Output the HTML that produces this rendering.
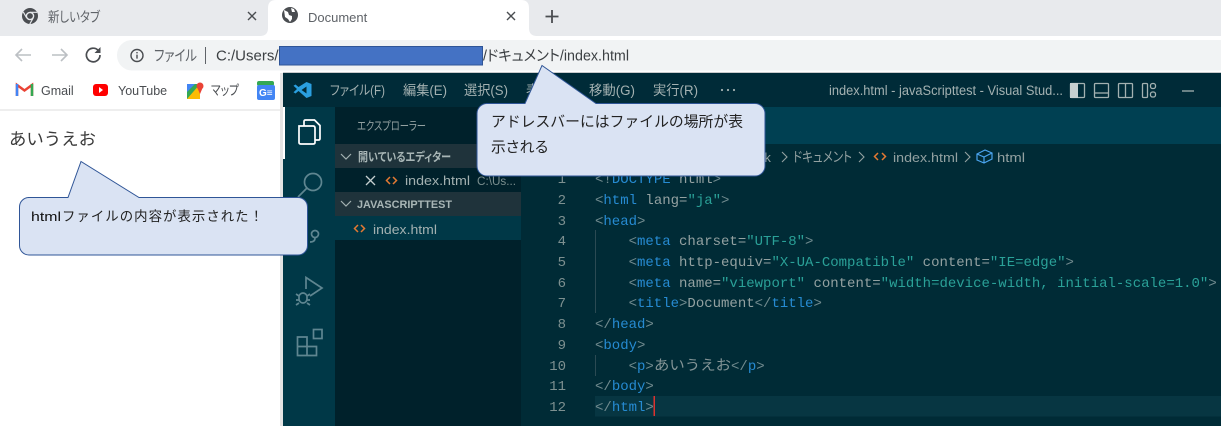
<!DOCTYPE html>
<html lang="ja"><head><meta charset="UTF-8"><title>Document</title>
<style>
html,body{margin:0;padding:0;background:#fff;width:1221px;height:426px;overflow:hidden}
svg{display:block}
text{font-family:"Liberation Sans","Noto Sans CJK JP",sans-serif;white-space:pre}
.k{font-feature-settings:"palt"}
.m{font-family:"Liberation Mono","Noto Sans CJK JP",monospace;font-size:14px;fill:#839496}
.b{fill:#268bd2}.a{fill:#93a1a1}.s{fill:#2aa198}.p{fill:#718b8f}
.n{font-family:"Liberation Mono",monospace;font-size:14px;fill:#7d9090;text-anchor:end}
.ch{font-size:13px;fill:#5f6368}
.v{fill:#a3b1b1;font-size:13.500px}
</style></head><body>
<svg xmlns="http://www.w3.org/2000/svg" width="1221" height="426" viewBox="0 0 1221 426">
<rect width="1221" height="426" fill="#fff"/>
<!-- tab strip -->
<rect width="1221" height="36" fill="#e8eaed"/>
<path d="M260 36q8 0 8-8V8q0-8 8-8h245q8 0 8 8v20q0 8 8 8z" fill="#fff"/>
<circle cx="30" cy="16" r="8" fill="#4a4d51"/><circle cx="30" cy="16" r="3.600" fill="#4a4d51" stroke="#e8eaed" stroke-width="1.400"/>
<path d="M30 12.300h7M26.700 18l-3.400-6M33.200 18l-3.400 6" stroke="#e8eaed" stroke-width="1.200"/>
<text x="48" y="22" class="ch k" style="font-size:14px" textLength="52" lengthAdjust="spacingAndGlyphs">新しいタブ</text>
<path d="M248 12l8 8M256 12l-8 8M507 12l8 8M515 12l-8 8" stroke="#4a4d51" stroke-width="1.400"/>
<circle cx="290" cy="15" r="8" fill="#4a4d51"/>
<path d="M284 10l4 2 1 3 3 1 0 3-2 3-2-3-3-2zM291 8l3 1 1 3-3 0z" fill="#fff"/>
<text x="308" y="22" class="ch">Document</text>
<path d="M552 10v13M545.500 16.500h13" stroke="#4a4d51" stroke-width="1.800"/>
<!-- toolbar -->
<path d="M31 55H16M22 49l-6 6 6 6" fill="none" stroke="#bcc0c4" stroke-width="1.600"/>
<path d="M52 55h15M61 49l6 6-6 6" fill="none" stroke="#bcc0c4" stroke-width="1.600"/>
<path d="M100 55a6.800 6.800 0 1 1-2-4.800" fill="none" stroke="#4a4d51" stroke-width="1.700"/><path d="M100.500 47v6h-6z" fill="#4a4d51"/>
<rect x="117" y="40" width="1130" height="30.500" rx="15" fill="#f1f3f4"/>
<circle cx="137" cy="55.500" r="6" fill="none" stroke="#4a4d51" stroke-width="1.400"/><path d="M137 52v1.400M137 54.600v4" stroke="#4a4d51" stroke-width="1.400"/>
<text x="154" y="60.500" class="k" style="font-size:15px;fill:#5f6368" textLength="43" lengthAdjust="spacingAndGlyphs">ファイル</text>
<rect x="205" y="47" width="1" height="17" fill="#5f6368"/>
<text x="216" y="60.500" style="font-size:15px;fill:#3c4043">C:/Users/</text>
<rect x="279.500" y="46.500" width="203" height="18.500" fill="#4472c4" stroke="#2f5597" stroke-width="1"/>
<text x="483" y="60.500" class="k" style="font-size:15px;fill:#3c4043" textLength="146" lengthAdjust="spacingAndGlyphs">/ドキュメント/index.html</text>
<!-- bookmarks -->
<path d="M17 96V85l7.500 5.500L32 85v11" fill="none" stroke="#ea4335" stroke-width="2.500"/>
<path d="M17 84v12" stroke="#4285f4" stroke-width="2.500"/><path d="M32 84v12" stroke="#34a853" stroke-width="2.500"/>
<text x="41" y="95" style="font-size:12.500px;fill:#4a4d51">Gmail</text>
<rect x="93" y="84" width="15" height="12" rx="3" fill="#f00"/><path d="M99 87l4 3-4 3z" fill="#fff"/>
<text x="118" y="95" style="font-size:12.500px;fill:#4a4d51">YouTube</text>
<path d="M187 84h13v15h-13z" fill="#34a853"/><path d="M187 99l13-15v15z" fill="#fbbc04"/><path d="M187 84h8l-8 8z" fill="#4285f4"/>
<circle cx="200" cy="86" r="3.500" fill="#ea4335"/><path d="M197 87l3 7 3-7z" fill="#ea4335"/>
<text x="211" y="95" class="k" style="font-size:13.500px;fill:#4a4d51" textLength="28" lengthAdjust="spacingAndGlyphs">マップ</text>
<rect x="257" y="81" width="17" height="5" rx="2" fill="#34a853"/>
<rect x="257" y="85" width="18" height="15" rx="2" fill="#4285f4"/>
<text x="259" y="96" style="font-size:10px;font-weight:bold;fill:#fff">G≡</text>
<rect x="0" y="109" width="283" height="2" fill="#eeeeee"/>
<!-- page -->
<text x="9" y="145" style="font-size:17px;fill:#3a3a3a" textLength="87" lengthAdjust="spacingAndGlyphs">あいうえお</text>
<!-- vscode -->
<rect x="280" y="73" width="3" height="353" fill="#e4e4e4"/>
<rect x="283" y="72" width="938" height="1.500" fill="#c9cbcd"/>
<rect x="283" y="73" width="938" height="353" fill="#002b38"/>
<rect x="283" y="107" width="53" height="319" fill="#003847"/>
<rect x="283" y="107" width="2" height="52" fill="#fff"/>
<rect x="335" y="107" width="186" height="319" fill="#00212b"/>
<rect x="335" y="144" width="186" height="24" fill="#1f333b"/>
<rect x="335" y="192" width="186" height="24" fill="#1f333b"/>
<rect x="335" y="216" width="186" height="24" fill="#003847"/>
<rect x="521" y="107" width="700" height="319" fill="#002b36"/>
<rect x="521" y="107" width="700" height="37" fill="#004052"/>
<!-- vscode logo -->
<path d="M306.500 82l5 2v12l-5 2-8-7-3 2.500-2-1.200 3.500-3.300-3.500-3.300 2-1.200 3 2.500zM306.500 86.500l-5 3.500 5 3.500z" fill="#2a9fe0"/>
<!-- menu -->
<text x="330" y="95" class="v k" textLength="55" lengthAdjust="spacingAndGlyphs">ファイル(F)</text>
<text x="403" y="95" class="v" textLength="44" lengthAdjust="spacingAndGlyphs">編集(E)</text>
<text x="464" y="95" class="v" textLength="44" lengthAdjust="spacingAndGlyphs">選択(S)</text>
<text x="526" y="95" class="v" textLength="44" lengthAdjust="spacingAndGlyphs">表示(V)</text>
<text x="589" y="95" class="v" textLength="46" lengthAdjust="spacingAndGlyphs">移動(G)</text>
<text x="653" y="95" class="v" textLength="45" lengthAdjust="spacingAndGlyphs">実行(R)</text>
<circle cx="722" cy="90" r="1.100" fill="#a3b1b1"/><circle cx="728" cy="90" r="1.100" fill="#a3b1b1"/><circle cx="734" cy="90" r="1.100" fill="#a3b1b1"/>
<text x="829" y="95" class="v" textLength="234" lengthAdjust="spacingAndGlyphs">index.html - javaScripttest - Visual Stud...</text>
<!-- layout icons -->
<g fill="none" stroke="#a3b1b1" stroke-width="1.300">
<rect x="1070.500" y="83.500" width="14" height="14" rx="1"/>
<rect x="1094.500" y="83.500" width="14" height="14" rx="1"/><path d="M1095 93h14"/>
<rect x="1118.500" y="83.500" width="14" height="14" rx="1"/><path d="M1125.500 84v13"/>
<rect x="1142.500" y="83.500" width="5" height="14" rx="1"/><rect x="1150.500" y="83.500" width="5" height="5" rx="2"/><rect x="1150.500" y="92" width="5" height="5" rx="2"/>
<path d="M1182 91h12"/>
</g>
<rect x="1070" y="83" width="8" height="15" fill="#c8d0d0"/>
<!-- activity icons -->
<g fill="none" stroke="#fff" stroke-width="1.700">
<path d="M304 126v-4.500q0-1.500 1.500-1.500h9l5.500 5.500v13q0 1.500-1.500 1.500H315"/>
<path d="M299 126h14q2 0 2 2v14.500q0 1.500-2 1.500h-12q-2 0-2-1.500z"/>
</g>
<g fill="none" stroke="#5f8691" stroke-width="1.700">
<circle cx="313" cy="182" r="8.500"/><path d="M307 188l-9 9"/>
<circle cx="315" cy="234" r="3.500"/><path d="M315 238q0 4-5 4"/>
<path d="M306 289v-11.500l16 10.500-12 8"/>
<path d="M299 297a4 4 0 0 1 8 0v2a4 4 0 0 1-8 0zM296 294l3 2M310 294l-3 2M296 300h3M307 300h3M296 305l3-2M310 305l-3-2"/>
<path d="M297.500 337h9.500v9.500h9.500v9h-19zM297.500 346.500H307V355.500"/>
<rect x="313.500" y="329.500" width="8.500" height="9"/>
</g>
<!-- sidebar -->
<text x="357" y="130" class="k" style="font-size:12px;fill:#93a1a1" textLength="69" lengthAdjust="spacingAndGlyphs">エクスプローラー</text>
<path d="M341 154l5 5 5-5M341 201l5 5 5-5" fill="none" stroke="#a3b1b1" stroke-width="1.200"/>
<text x="358" y="161" class="k" style="font-size:12px;font-weight:bold;fill:#a8b6b6" textLength="93" lengthAdjust="spacingAndGlyphs">開いているエディター</text>
<path d="M366 176l9 9M375 176l-9 9" stroke="#c5cfcf" stroke-width="1.300"/>
<path d="M390 177l-3.500 3.500 3.500 3.500M393 177l3.500 3.500-3.500 3.500" fill="none" stroke="#e37933" stroke-width="1.500"/>
<text x="405" y="185" style="font-size:13px;fill:#a3b1b1" textLength="65" lengthAdjust="spacingAndGlyphs">index.html</text>
<text x="477" y="185" style="font-size:11.500px;fill:#7a8e8e" textLength="39" lengthAdjust="spacingAndGlyphs">C:\Us...</text>
<text x="357" y="208" style="font-size:11px;font-weight:bold;fill:#a8b6b6" textLength="95" lengthAdjust="spacingAndGlyphs">JAVASCRIPTTEST</text>
<path d="M358 225l-3.500 3.500 3.500 3.500M361 225l3.500 3.500-3.500 3.500" fill="none" stroke="#e37933" stroke-width="1.500"/>
<text x="373" y="234" style="font-size:13px;fill:#a3b1b1" textLength="64" lengthAdjust="spacingAndGlyphs">index.html</text>
<!-- breadcrumb -->
<text x="755" y="162" style="font-size:13px;fill:#93a1a1">wk</text>
<path d="M782 152l5 5-5 5M859 152l5 5-5 5M965 152l5 5-5 5" fill="none" stroke="#93a1a1" stroke-width="1.100"/>
<text x="793" y="162" class="k" style="font-size:14px;fill:#93a1a1" textLength="59" lengthAdjust="spacingAndGlyphs">ドキュメント</text>
<path d="M878 153l-3.500 3.500 3.500 3.500M882 153l3.500 3.500-3.500 3.500" fill="none" stroke="#e37933" stroke-width="1.500"/>
<text x="893" y="162" style="font-size:13px;fill:#93a1a1" textLength="65" lengthAdjust="spacingAndGlyphs">index.html</text>
<path d="M977 154l8-4 7 3v6l-8 4-7-3zM977 154l7 3 8-4M984 157v6" fill="none" stroke="#4aa5f0" stroke-width="1.200"/>
<text x="997" y="162" style="font-size:13px;fill:#93a1a1" textLength="28" lengthAdjust="spacingAndGlyphs">html</text>
<!-- code -->
<rect x="595" y="396" width="626" height="20.500" fill="#073642"/>
<rect x="595" y="230" width="1" height="83" fill="#2b4a53"/>
<rect x="595" y="355" width="1" height="21" fill="#2b4a53"/>
<g>
<text x="566" y="183" class="n">1</text><text x="566" y="204" class="n">2</text><text x="566" y="225" class="n">3</text><text x="566" y="245" class="n">4</text><text x="566" y="266" class="n">5</text><text x="566" y="287" class="n">6</text><text x="566" y="307" class="n">7</text><text x="566" y="328" class="n">8</text><text x="566" y="349" class="n">9</text><text x="566" y="370" class="n">10</text><text x="566" y="390" class="n">11</text><text x="566" y="411" class="n">12</text>
</g>
<text x="595" y="183" class="m"><tspan class="p">&lt;!</tspan><tspan class="b">DOCTYPE</tspan> <tspan class="a">html</tspan><tspan class="p">&gt;</tspan></text>
<text x="595" y="204" class="m"><tspan class="p">&lt;</tspan><tspan class="b">html</tspan> <tspan class="a">lang=</tspan><tspan class="s">"ja"</tspan><tspan class="p">&gt;</tspan></text>
<text x="595" y="225" class="m"><tspan class="p">&lt;</tspan><tspan class="b">head</tspan><tspan class="p">&gt;</tspan></text>
<text x="628.600" y="245" class="m"><tspan class="p">&lt;</tspan><tspan class="b">meta</tspan> <tspan class="a">charset=</tspan><tspan class="s">"UTF-8"</tspan><tspan class="p">&gt;</tspan></text>
<text x="628.600" y="266" class="m"><tspan class="p">&lt;</tspan><tspan class="b">meta</tspan> <tspan class="a">http-equiv=</tspan><tspan class="s">"X-UA-Compatible"</tspan> <tspan class="a">content=</tspan><tspan class="s">"IE=edge"</tspan><tspan class="p">&gt;</tspan></text>
<text x="628.600" y="287" class="m"><tspan class="p">&lt;</tspan><tspan class="b">meta</tspan> <tspan class="a">name=</tspan><tspan class="s">"viewport"</tspan> <tspan class="a">content=</tspan><tspan class="s">"width=device-width, initial-scale=1.0"</tspan><tspan class="p">&gt;</tspan></text>
<text x="628.600" y="307" class="m"><tspan class="p">&lt;</tspan><tspan class="b">title</tspan><tspan class="p">&gt;</tspan><tspan class="a">Document</tspan><tspan class="p">&lt;/</tspan><tspan class="b">title</tspan><tspan class="p">&gt;</tspan></text>
<text x="595" y="328" class="m"><tspan class="p">&lt;/</tspan><tspan class="b">head</tspan><tspan class="p">&gt;</tspan></text>
<text x="595" y="349" class="m"><tspan class="p">&lt;</tspan><tspan class="b">body</tspan><tspan class="p">&gt;</tspan></text>
<text x="628.600" y="370" class="m"><tspan class="p">&lt;</tspan><tspan class="b">p</tspan><tspan class="p">&gt;</tspan></text>
<text x="654" y="370" class="m" style="fill:#839496" textLength="77" lengthAdjust="spacingAndGlyphs">あいうえお</text>
<text x="731" y="370" class="m"><tspan class="p">&lt;/</tspan><tspan class="b">p</tspan><tspan class="p">&gt;</tspan></text>
<text x="595" y="390" class="m"><tspan class="p">&lt;/</tspan><tspan class="b">body</tspan><tspan class="p">&gt;</tspan></text>
<text x="595" y="411" class="m"><tspan class="p">&lt;/</tspan><tspan class="b">html</tspan><tspan class="p">&gt;</tspan></text>
<rect x="653.500" y="396" width="1.500" height="20" fill="#dc322f"/>
<!-- callout 1 -->
<path d="M28 197.500H68L81 161.500 139 197.500H298a9.500 9.500 0 0 1 9.500 9.500V245.500a9.500 9.500 0 0 1-9.500 9.500H29a9.500 9.500 0 0 1-9.500-9.500V207a9.500 9.500 0 0 1 9.500-9.500z" fill="#dae3f3" stroke="#2f5597" stroke-width="1"/>
<text x="31" y="221" style="font-size:13px;fill:#111" textLength="30" lengthAdjust="spacingAndGlyphs">html</text>
<text x="62" y="221" style="font-size:13.400px;fill:#222" textLength="201" lengthAdjust="spacing">ファイルの内容が表示された！</text>
<!-- callout 2 -->
<path d="M486 103.500H525L542 65.500 596 103.500H755a10 10 0 0 1 10 10V166a10 10 0 0 1-10 10H487a10 10 0 0 1-10-10V113.500a10 10 0 0 1 10-10z" fill="#dae3f3" stroke="#2f5597" stroke-width="1"/>
<text x="491" y="126.500" style="font-size:14.800px;fill:#222" textLength="252" lengthAdjust="spacing">アドレスバーにはファイルの場所が表</text>
<text x="491" y="152" style="font-size:14.800px;fill:#222" textLength="58" lengthAdjust="spacing">示される</text>
</svg>
</body></html>
